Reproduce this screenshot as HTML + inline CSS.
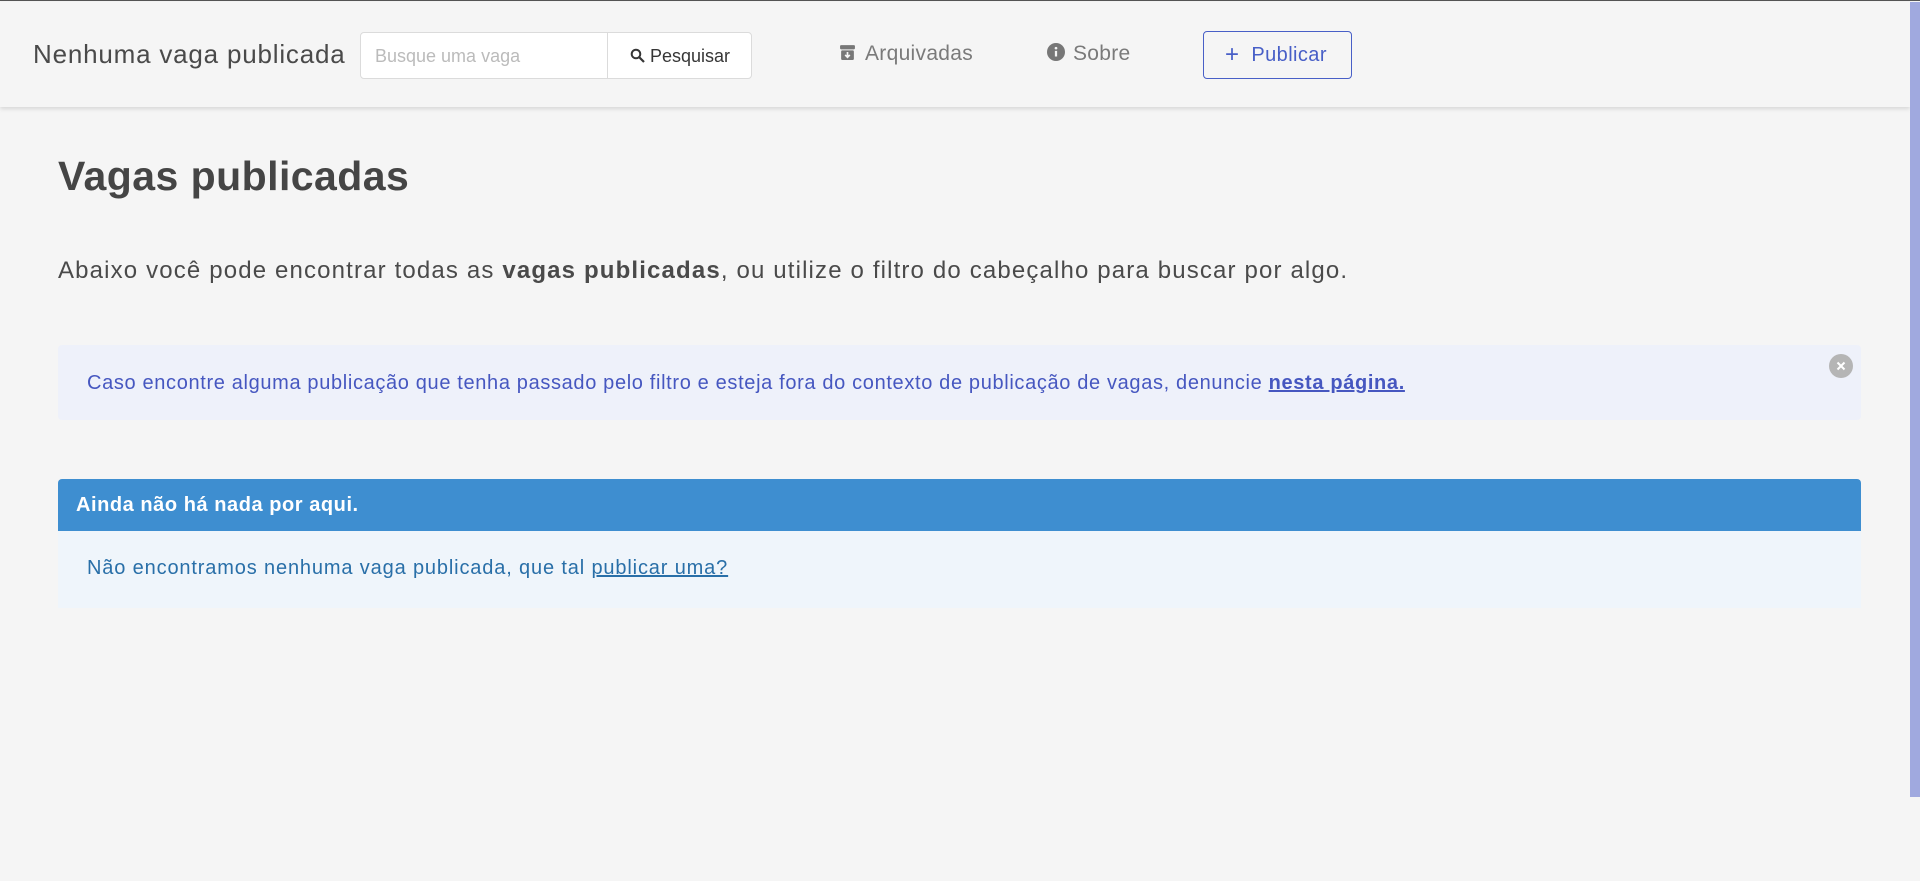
<!DOCTYPE html>
<html><head><meta charset="utf-8"><style>
*{box-sizing:border-box;margin:0;padding:0}
body{width:1920px;height:881px;background:#f5f5f5;font-family:"Liberation Sans",sans-serif;position:relative;overflow:hidden;border-top:1px solid #555}
.hdr{position:absolute;left:0;top:1px;width:1910px;height:105px;background:#f5f5f5;box-shadow:0 2px 4px rgba(0,0,0,.12)}
.sb{position:absolute;right:0;top:1px;width:10px;height:795px;background:#a0a9df}
.abs{position:absolute;white-space:nowrap}
.brand{left:33px;top:38px;font-size:26px;color:#4a4a4a;letter-spacing:.8px}
.inp{left:360px;top:31px;width:248px;height:47px;background:#fff;border:1px solid #dbdbdb;border-radius:4px 0 0 4px;font-size:18px;color:#bbb;padding:13px 0 0 14px}
.btn{left:607px;top:31px;width:145px;height:47px;background:#fff;border:1px solid #dbdbdb;border-radius:0 4px 4px 0;font-size:18px;color:#363636;padding:13px 0 0 22px}
.nav{font-size:21px;color:#7a7a7a;top:41px;letter-spacing:.3px}
.pub{left:1203px;top:30px;width:149px;height:48px;border:1px solid #485fc7;border-radius:4px;color:#485fc7;font-size:20px;padding:9px 0 0 21px;letter-spacing:.4px}
h1{position:absolute;left:58px;top:152px;font-size:41px;color:#454545;font-weight:bold;letter-spacing:.45px}
.p{left:58px;top:256px;font-size:24px;color:#4a4a4a;letter-spacing:1.15px}
.note{left:58px;top:344px;width:1803px;height:75px;background:#eef1fa;border-radius:4px}
.note span.t{position:absolute;left:29px;top:27px;font-size:20px;color:#4657c0;letter-spacing:.65px}
.x{position:absolute;left:1771px;top:9px;width:24px;height:24px;border-radius:50%;background:#b5b5b5}
.mh{left:58px;top:478px;width:1803px;height:52px;background:#3e8ed0;border-radius:4px 4px 0 0;color:#fff;font-weight:bold;font-size:20px;padding:15px 0 0 18px;letter-spacing:.55px}
.mb{left:58px;top:530px;width:1803px;height:77px;background:#eff5fb;color:#296fa8;font-size:20px;padding:26px 0 0 29px;letter-spacing:.85px}
</style></head><body>
<div class="hdr"></div>
<div class="sb"></div>
<div class="abs brand">Nenhuma vaga publicada</div>
<div class="abs inp">Busque uma vaga</div>
<div class="abs btn"><svg width="16" height="16" viewBox="0 0 16 16" style="vertical-align:-2px;margin-right:4px"><circle cx="6" cy="6" r="4.3" fill="none" stroke="#363636" stroke-width="2"/><path d="M9 9l5 5" stroke="#363636" stroke-width="2.2"/></svg>Pesquisar</div>
<div class="abs nav" style="left:839px"><svg width="17" height="17" viewBox="0 0 16 16" style="vertical-align:-1px;margin-right:9px"><rect x="1" y="1" width="14" height="4" rx="1" fill="#777"/><rect x="2" y="6" width="12" height="9" rx="1" fill="#777"/><path d="M8 7.5v5M5.8 10.3L8 12.5l2.2-2.2" stroke="#f5f5f5" stroke-width="1.6" fill="none"/></svg>Arquivadas</div>
<div class="abs nav" style="left:1047px"><svg width="18" height="18" viewBox="0 0 16 16" style="vertical-align:-1px;margin-right:8px"><circle cx="8" cy="8" r="8" fill="#777"/><rect x="7" y="7" width="2" height="5" fill="#f5f5f5"/><circle cx="8" cy="4.6" r="1.2" fill="#f5f5f5"/></svg>Sobre</div>
<div class="abs pub"><span style="font-size:24px;margin-right:12px;vertical-align:-1px">+</span>Publicar</div>
<h1>Vagas publicadas</h1>
<div class="abs p">Abaixo você pode encontrar todas as <b>vagas publicadas</b>, ou utilize o filtro do cabeçalho para buscar por algo.</div>
<div class="abs note"><span class="t">Caso encontre alguma publicação que tenha passado pelo filtro e esteja fora do contexto de publicação de vagas, denuncie <b><u>nesta página.</u></b></span><div class="x"><svg width="24" height="24"><path d="M8.5 8.5l7 7M15.5 8.5l-7 7" stroke="#fff" stroke-width="2"/></svg></div></div>
<div class="abs mh">Ainda não há nada por aqui.</div>
<div class="abs mb">Não encontramos nenhuma vaga publicada, que tal <u>publicar uma?</u></div>
</body></html>
